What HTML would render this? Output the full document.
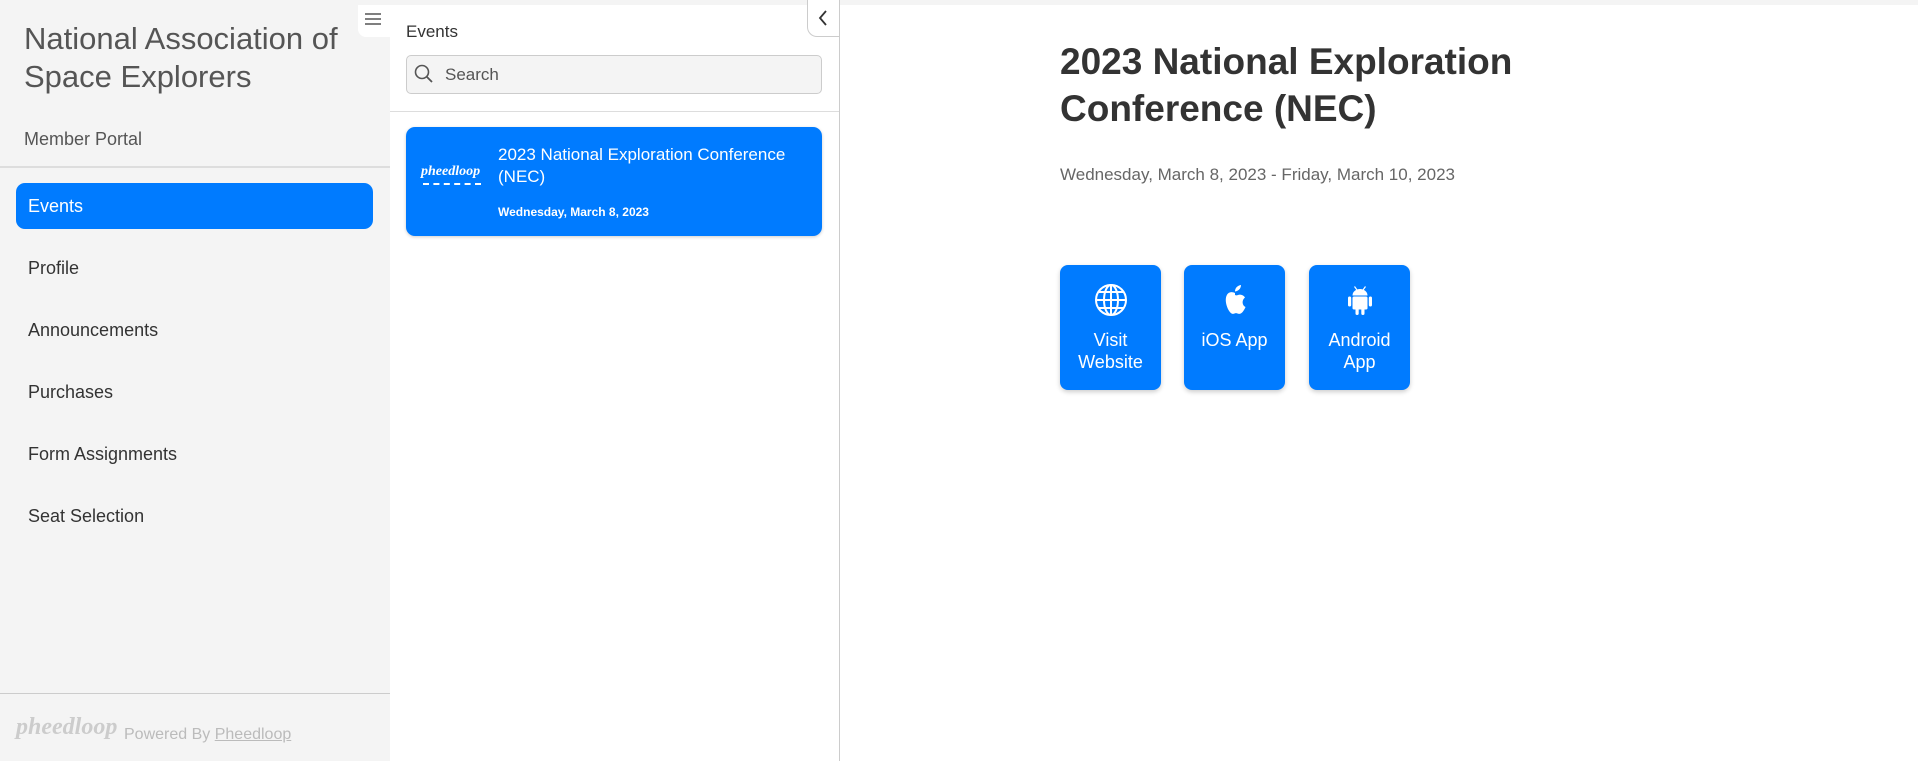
<!DOCTYPE html>
<html><head><meta charset="utf-8"><style>
*{box-sizing:border-box;margin:0;padding:0}
body{width:1918px;height:761px;overflow:hidden;background:#f4f4f4;font-family:"Liberation Sans",sans-serif;position:relative;color:#333}
.a{position:absolute}
.side{left:0;top:0;width:390px;height:761px;background:#f4f4f4}
.nav{left:28px;font-size:18px;color:#333}
.btn{top:265px;width:101px;height:125px;background:#007bff;border-radius:8px;color:#fff;text-align:center;font-size:18px;line-height:22px;box-shadow:0 2px 5px rgba(0,0,0,.2)}
.btn svg{display:block;margin:18px auto 12px}
</style></head><body>
<div class="a side">
 <div class="a" style="left:24px;top:20px;font-size:31px;line-height:38px;color:#555">National Association of<br>Space Explorers</div>
 <div class="a" style="left:24px;top:129px;font-size:18px;color:#555">Member Portal</div>
 <div class="a" style="left:0;top:166px;width:390px;height:2px;background:#ddd"></div>
 <div class="a" style="left:16px;top:183px;width:357px;height:46px;background:#007bff;border-radius:9px;color:#fff;font-size:18px;padding:13px 12px">Events</div>
 <div class="a nav" style="top:258px">Profile</div>
 <div class="a nav" style="top:320px">Announcements</div>
 <div class="a nav" style="top:382px">Purchases</div>
 <div class="a nav" style="top:444px">Form Assignments</div>
 <div class="a nav" style="top:506px">Seat Selection</div>
 <div class="a" style="left:0;top:693px;width:390px;height:1px;background:#ccc"></div>
 <div class="a" style="left:16px;top:714px;font-family:'Liberation Serif',serif;font-style:italic;font-weight:bold;font-size:24px;color:#ccc">pheedloop</div>
 <div class="a" style="left:124px;top:726px;font-size:16px;color:#bbb">Powered By <u>Pheedloop</u></div>
</div>
<div class="a" style="left:390px;top:5px;width:1528px;height:756px;background:#fff"></div>
<div class="a" style="left:358px;top:5px;width:32px;height:32px;background:#fff;border-radius:0 0 0 8px"></div>
<svg class="a" style="left:365px;top:12px" width="16" height="14"><path d="M0 2h16M0 7h16M0 12h16" stroke="#555" stroke-width="1.6"/></svg>
<div class="a" style="left:406px;top:22px;font-size:17px;color:#333">Events</div>
<div class="a" style="left:406px;top:55px;width:416px;height:39px;background:#f4f4f4;border:1px solid #ccc;border-radius:5px"></div>
<svg class="a" style="left:414px;top:64px" width="20" height="20"><circle cx="8" cy="8" r="6.5" fill="none" stroke="#555" stroke-width="1.6"/><path d="M13 13l5 5" stroke="#555" stroke-width="1.8"/></svg>
<div class="a" style="left:445px;top:65px;font-size:17px;color:#555">Search</div>
<div class="a" style="left:390px;top:111px;width:449px;height:1px;background:#ddd"></div>
<div class="a" style="left:406px;top:127px;width:416px;height:109px;background:#007bff;border-radius:9px;box-shadow:0 1px 3px rgba(0,0,0,.2)"></div>
<div class="a" style="left:421px;top:164px;font-family:'Liberation Serif',serif;font-style:italic;font-weight:bold;font-size:14px;color:#fff">pheedloop</div>
<div class="a" style="left:423px;top:183px;width:58px;border-top:2px dashed #fff"></div>
<div class="a" style="left:498px;top:144px;width:320px;font-size:17px;line-height:22px;color:#fff">2023 National Exploration Conference (NEC)</div>
<div class="a" style="left:498px;top:205px;font-size:12px;font-weight:bold;color:#fff">Wednesday, March 8, 2023</div>
<div class="a" style="left:839px;top:0;width:1px;height:761px;background:#ccc"></div>
<div class="a" style="left:807px;top:0;width:32px;height:37px;background:#fff;border:1px solid #ccc;border-top:none;border-right:none;border-radius:0 0 0 10px"></div>
<svg class="a" style="left:817px;top:9px" width="12" height="18"><path d="M9 2L3 9l6 7" fill="none" stroke="#333" stroke-width="1.8"/></svg>
<div class="a" style="left:1060px;top:38px;font-size:37px;line-height:47px;font-weight:bold;color:#333">2023 National Exploration<br>Conference (NEC)</div>
<div class="a" style="left:1060px;top:165px;font-size:17px;color:#666">Wednesday, March 8, 2023 - Friday, March 10, 2023</div>
<div class="a btn" style="left:1060px"><svg width="34" height="34" viewBox="0 0 34 34" fill="none" stroke="#fff" stroke-width="2"><circle cx="17" cy="17" r="15"/><ellipse cx="17" cy="17" rx="7" ry="15"/><path d="M17 2v30M2 17h30M5 9h24M5 25h24"/></svg>Visit<br>Website</div>
<div class="a btn" style="left:1184px"><svg width="34" height="34" viewBox="0 0 34 34"><path fill="#fff" d="M17 10c-2-1-5-1.5-7 .5-4 4-2 13 1.5 18 1.5 2 3 3 5 2 1-.5 2-.5 3 0 2 1 4 0 5.5-2 1-1.5 2-3 2.5-4.5-3.5-1.5-4-7-.5-9.5-1.5-2.5-4.5-3.5-7-2.5-1 .5-2 .5-3 0zM17 8.5c0-3.5 2.5-6 6-6.5 0 3.5-2.5 6-6 6.5z"/></svg>iOS App</div>
<div class="a btn" style="left:1309px"><svg width="34" height="34" viewBox="0 0 34 34" fill="#fff"><path d="M9.5 12.5a7.5 6.5 0 0 1 15 0z"/><rect x="9.5" y="13.5" width="15" height="13" rx="1.5"/><rect x="5" y="13.5" width="3.2" height="10" rx="1.6"/><rect x="25.8" y="13.5" width="3.2" height="10" rx="1.6"/><rect x="12.5" y="24" width="3.2" height="8" rx="1.6"/><rect x="18.3" y="24" width="3.2" height="8" rx="1.6"/><path d="M11.5 3.5l2.5 3.5M22.5 3.5l-2.5 3.5" stroke="#fff" stroke-width="1.2"/></svg>Android<br>App</div>
</body></html>
